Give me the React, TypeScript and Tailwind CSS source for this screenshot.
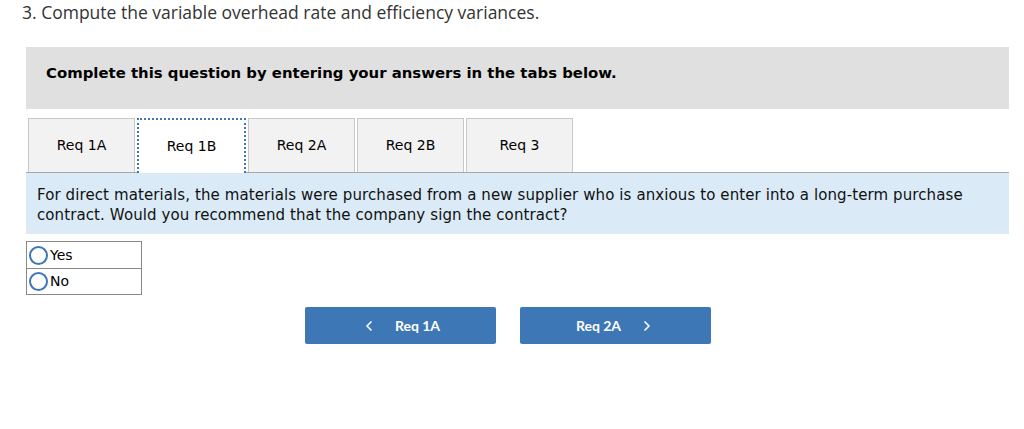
import { ChevronLeft, ChevronRight } from "lucide-react";

const tabs = ["Req 1A", "Req 1B", "Req 2A", "Req 2B", "Req 3"];

export default function App() {
  return (
    <div className="w-[1024px] h-[429px] bg-white text-[#222] overflow-hidden">
      {/* Question title */}
      <div className="pl-[22px] h-[47px] text-[17.5px] leading-[24px] font-['Open_Sans',sans-serif] text-[#333]">
        3. Compute the variable overhead rate and efficiency variances.
      </div>

      <div className="ml-[26px] w-[983px]">
        {/* Instructions */}
        <div className="h-[62px] bg-[#e0e0e0] pl-[20px] pt-[16px] font-['DejaVu_Sans',sans-serif] font-bold text-[14.9px] leading-[20px] text-black">
          Complete this question by entering your answers in the tabs below.
        </div>

        {/* Tabs */}
        <div className="mt-[9px] pl-[2px] flex gap-[2px] border-b border-[#a8a8a8] h-[55px] items-stretch">
          {tabs.map((t, i) => (
            <div
              key={t}
              className={
                i === 1
                  ? "w-[109px] bg-white border-2 border-dotted border-[#3d77b6] border-b-0 flex items-center justify-center font-['DejaVu_Sans',sans-serif] text-[14px] text-black -mb-px"
                  : "w-[107px] bg-[#f2f2f2] border border-[#c8c8c8] border-b-0 flex items-center justify-center font-['DejaVu_Sans',sans-serif] text-[14px] text-black"
              }
            >
              {t}
            </div>
          ))}
        </div>

        {/* Question body */}
        <div className="h-[61px] bg-[#daebf7] px-[11px] pt-[12px] font-['DejaVu_Sans',sans-serif] text-[15px] tracking-[0.1px] leading-[20px] text-[#111]">
          For direct materials, the materials were purchased from a new supplier who is anxious to enter into a long-term purchase contract. Would you recommend that the company sign the contract?
        </div>

        {/* Answer options */}
        <div className="mt-[7px] w-[116px] border border-[#888] font-['DejaVu_Sans',sans-serif] text-[14px] text-black">
          {["Yes", "No"].map((o, i) => (
            <div key={o} className={"h-[26px] flex items-center pl-[2px] gap-[2px]" + (i === 1 ? " border-t border-[#888]" : "")}>
              <span className="w-[19px] h-[19px] rounded-full border-2 border-[#3d77b6] bg-white inline-block" />
              <span>{o}</span>
            </div>
          ))}
        </div>

        {/* Navigation buttons */}
        <div className="mt-[12px] flex gap-[24px] ml-[279px]">
          <button className="w-[191px] h-[37px] rounded-[2px] bg-[#3d77b6] text-white font-['Lato',sans-serif] font-bold text-[14px] flex items-center justify-center gap-[18px]">
            <ChevronLeft size={16} strokeWidth={2.5} />
            <span>Req 1A</span>
          </button>
          <button className="w-[191px] h-[37px] rounded-[2px] bg-[#3d77b6] text-white font-['Lato',sans-serif] font-bold text-[14px] flex items-center justify-center gap-[18px]">
            <span>Req 2A</span>
            <ChevronRight size={16} strokeWidth={2.5} />
          </button>
        </div>
      </div>
    </div>
  );
}
